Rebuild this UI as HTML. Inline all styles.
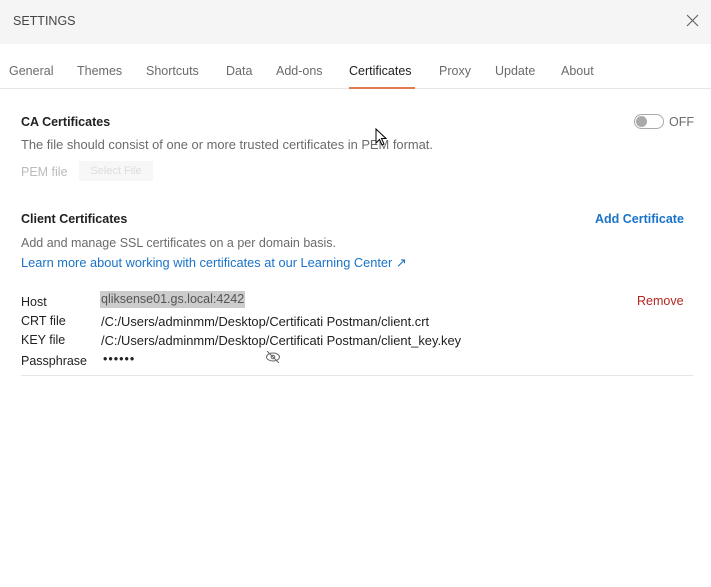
<!DOCTYPE html>
<html><head><style>
body{margin:0;width:711px;height:587px;background:#fff;font-family:"Liberation Sans",sans-serif;font-size:12.5px;color:#212121;position:relative;overflow:hidden}
.a{position:absolute;white-space:nowrap;line-height:15px}
.hdr{position:absolute;left:0;top:0;width:711px;height:44px;background:#f5f5f5}
.tab{position:absolute;top:64px;color:#6b6b6b;font-size:12.5px}
.g{color:#6b6b6b}
</style></head><body>
<div class="hdr"></div>
<div class="a" style="left:13px;top:14px;font-size:12.5px;color:#444">SETTINGS</div>
<svg class="a" style="left:686px;top:14px" width="13" height="13"><path d="M1 1L12 12M12 1L1 12" stroke="#666" stroke-width="1.2"/></svg>
<div class="tab" style="left:9px">General</div>
<div class="tab" style="left:77px">Themes</div>
<div class="tab" style="left:146px">Shortcuts</div>
<div class="tab" style="left:226px">Data</div>
<div class="tab" style="left:276px">Add-ons</div>
<div class="tab" style="left:349px;color:#212121">Certificates</div>
<div class="tab" style="left:439px">Proxy</div>
<div class="tab" style="left:495px">Update</div>
<div class="tab" style="left:561px">About</div>
<div class="a" style="left:0;top:88px;width:711px;height:1px;background:#e6e6e6"></div>
<div class="a" style="left:349px;top:87px;width:66px;height:2px;background:#e07a50"></div>
<div class="a" style="left:21px;top:115px;font-weight:bold;font-size:12.5px">CA Certificates</div>
<div class="a" style="left:634px;top:114px;width:30px;height:15px;border:1px solid #aaa;border-radius:9px;box-sizing:border-box"></div>
<div class="a" style="left:636px;top:116px;width:11px;height:11px;border-radius:50%;background:#aaa"></div>
<div class="a g" style="left:669px;top:115px">OFF</div>
<div class="a g" style="left:21px;top:137px;font-size:12.9px">The file should consist of one or more trusted certificates in PEM format.</div>
<svg class="a" style="left:375px;top:128px" width="12" height="20"><path d="M1 1L1 15L4.5 11.5L7 17L9 16L6.5 10.5L11 10.5Z" fill="#fff" stroke="#000" stroke-width="1"/></svg>
<div class="a" style="left:21px;top:165px;color:#bbb">PEM file</div>
<div class="a" style="left:79px;top:161px;width:74px;height:20px;background:#f7f7f7;color:#ddd;font-size:11px;line-height:20px;text-align:center">Select File</div>
<div class="a" style="left:21px;top:212px;font-weight:bold">Client Certificates</div>
<div class="a" style="left:595px;top:212px;color:#1a73c8;font-weight:bold">Add Certificate</div>
<div class="a g" style="left:21px;top:236px">Add and manage SSL certificates on a per domain basis.</div>
<div class="a" style="left:21px;top:255px;color:#1a73c8;font-size:12.8px">Learn more about working with certificates at our Learning Center ↗</div>
<div class="a" style="left:21px;top:295px">Host</div>
<div class="a" style="left:100px;top:291px;background:#ccc;padding:1px 1px;color:#555">qliksense01.gs.local:4242</div>
<div class="a" style="left:637px;top:294px;color:#b3261e">Remove</div>
<div class="a" style="left:21px;top:314px">CRT file</div>
<div class="a" style="left:101px;top:314px;font-size:12.9px">/C:/Users/adminmm/Desktop/Certificati Postman/client.crt</div>
<div class="a" style="left:21px;top:333px">KEY file</div>
<div class="a" style="left:101px;top:333px;font-size:12.9px">/C:/Users/adminmm/Desktop/Certificati Postman/client_key.key</div>
<div class="a" style="left:21px;top:354px">Passphrase</div>
<div class="a" style="left:103px;top:352px;letter-spacing:1px">••••••</div>
<svg class="a" style="left:265px;top:351px" width="16" height="12"><ellipse cx="8" cy="6" rx="6.5" ry="4" fill="none" stroke="#666"/><circle cx="8" cy="6" r="1.8" fill="none" stroke="#666"/><path d="M2 0L14 12" stroke="#666"/></svg>
<div class="a" style="left:21px;top:375px;width:672px;height:1px;background:#e6e6e6"></div>
</body></html>
